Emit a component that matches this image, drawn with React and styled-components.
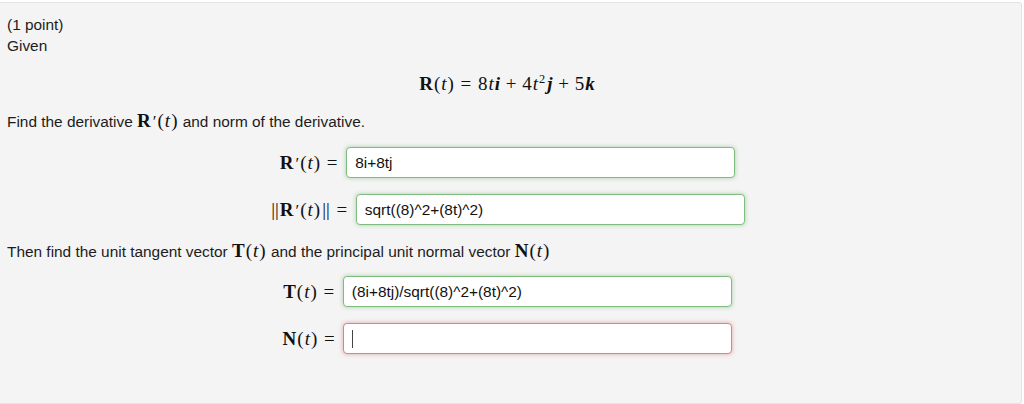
import React from 'react'
import styled, { createGlobalStyle } from 'styled-components'

const GlobalStyle = createGlobalStyle`
  html, body {
    margin: 0;
    padding: 0;
    background: #ffffff;
  }
  body {
    font-family: 'Liberation Sans', Arial, sans-serif;
  }
`

const Panel = styled.div`
  box-sizing: border-box;
  margin-top: 2px;
  width: 1022px;
  height: 402px;
  background: #f4f4f4;
  border: 1px solid #e4e4e4;
  border-left: none;
  border-radius: 0 3px 3px 0;
  padding: 11px 13px 0 7px;
  color: #1c1c1c;
  font-size: 15.4px;
`

const TextLine = styled.div`
  line-height: 21px;
  height: 21px;
  margin-top: ${(p) => p.$gap || 0}px;
  white-space: nowrap;
`

const Display = styled.div`
  display: flex;
  justify-content: center;
  align-items: center;
  height: ${(p) => p.$h || 31}px;
  margin-top: ${(p) => p.$gap || 0}px;
`

const Math = styled.span`
  font-family: 'Liberation Serif', serif;
  font-size: 19px;
  letter-spacing: 1px;
  color: #111;
  white-space: nowrap;
`

const Bold = styled.span`
  font-weight: 700;
`

const Var = styled.span`
  font-style: italic;
`

const BoldVar = styled.span`
  font-weight: 700;
  font-style: italic;
`

const Sup = styled.sup`
  font-size: 0.65em;
  vertical-align: 0.6em;
  line-height: 0;
  margin-right: 1px;
`

const Op = styled.span`
  margin: 0 ${(p) => (p.$rel ? 0.3 : 0.25)}em;
`

const Prime = styled.span`
  font-size: 0.9em;
  margin-left: 1px;
`

const Norm = styled.span`
  letter-spacing: 0;
  margin: 0 1px;
`

const Label = styled(Math)`
  margin-right: 2px;
`

const Field = styled.div`
  box-sizing: border-box;
  display: flex;
  align-items: center;
  width: 389px;
  height: 31px;
  padding: 0 8px;
  background: #ffffff;
  border-radius: 4px;
  font-family: 'Liberation Sans', Arial, sans-serif;
  font-size: 15.4px;
  color: #111;
  border: 1px solid ${(p) => (p.$bad ? '#d98585' : '#80bc80')};
  box-shadow: 0 0 4px
    ${(p) => (p.$bad ? 'rgba(210, 90, 90, 0.5)' : 'rgba(90, 170, 90, 0.5)')};
`

const Caret = styled.span`
  display: inline-block;
  width: 1px;
  height: 18px;
  background: #444;
`

const Open = () => <span>(</span>
const Close = () => <span>)</span>

const Rt = ({ prime }) => (
  <>
    <Bold>R</Bold>
    {prime && <Prime>′</Prime>}
    <Open />
    <Var>t</Var>
    <Close />
  </>
)

const Fn = ({ name }) => (
  <>
    <Bold>{name}</Bold>
    <Open />
    <Var>t</Var>
    <Close />
  </>
)

const App = () => {
  return (
    <>
      <GlobalStyle />
      <Panel>
        <TextLine>(1 point)</TextLine>
        <TextLine>Given</TextLine>

        <Display $h={32} $gap={12}>
          <Math>
            <Rt />
            <Op $rel>=</Op>8<Var>t</Var>
            <BoldVar>i</BoldVar>
            <Op>+</Op>4<Var>t</Var>
            <Sup>2</Sup>
            <BoldVar>j</BoldVar>
            <Op>+</Op>5<BoldVar>k</BoldVar>
          </Math>
        </Display>

        <TextLine $gap={10}>
          Find the derivative{' '}
          <Math>
            <Rt prime />
          </Math>{' '}
          and norm of the derivative.
        </TextLine>

        <Display $gap={16}>
          <Label>
            <Rt prime />
            <Op $rel>=</Op>
          </Label>
          <Field>8i+8tj</Field>
        </Display>

        <Display $gap={16}>
          <Label>
            <Norm>||</Norm>
            <Rt prime />
            <Norm>||</Norm>
            <Op $rel>=</Op>
          </Label>
          <Field>sqrt((8)^2+(8t)^2)</Field>
        </Display>

        <TextLine $gap={15}>
          Then find the unit tangent vector{' '}
          <Math>
            <Fn name="T" />
          </Math>{' '}
          and the principal unit normal vector{' '}
          <Math>
            <Fn name="N" />
          </Math>
        </TextLine>

        <Display $gap={15}>
          <Label>
            <Fn name="T" />
            <Op $rel>=</Op>
          </Label>
          <Field>(8i+8tj)/sqrt((8)^2+(8t)^2)</Field>
        </Display>

        <Display $gap={16}>
          <Label>
            <Fn name="N" />
            <Op $rel>=</Op>
          </Label>
          <Field $bad>
            <Caret />
          </Field>
        </Display>
      </Panel>
    </>
  )
}

export default App
